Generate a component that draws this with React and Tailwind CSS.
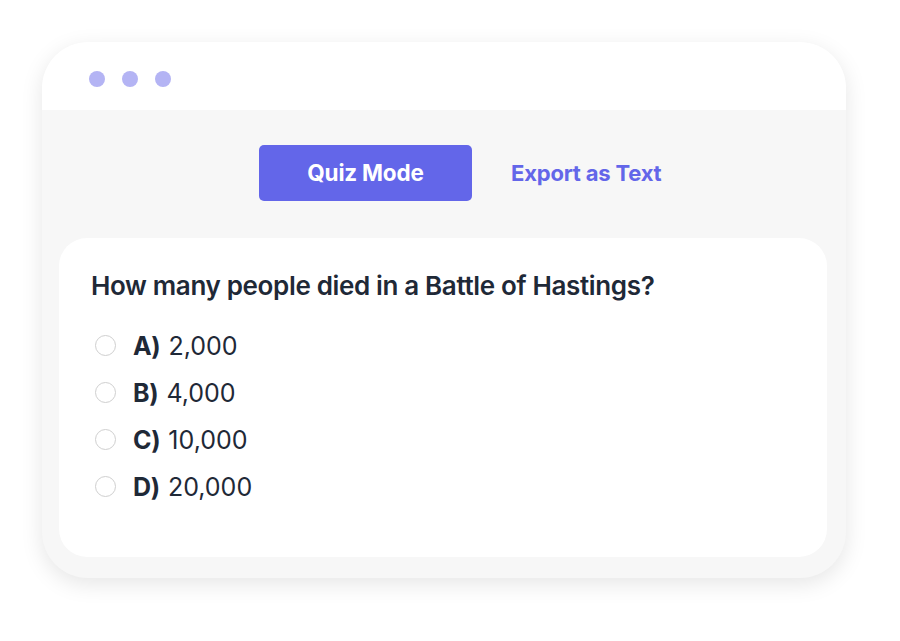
import React from 'react';

const options = [
  { label: 'A)', value: '2,000' },
  { label: 'B)', value: '4,000' },
  { label: 'C)', value: '10,000' },
  { label: 'D)', value: '20,000' },
];

const App = () => {
  return (
    <div className="w-[900px] h-[641px] bg-white pt-[42px] pl-[42px]" style={{ fontFamily: 'Inter, "Noto Sans", sans-serif' }}>
      <div className="w-[804px] h-[536px] rounded-[46px] bg-[#f7f7f7] overflow-hidden flex flex-col shadow-[0_6px_22px_rgba(0,0,0,0.10)]">
        {/* title bar */}
        <div className="h-[68px] bg-white flex items-start gap-[17px] pl-[47px] pt-[29px] shrink-0">
          <span className="w-[16px] h-[16px] rounded-full bg-[#b4b4f4]"></span>
          <span className="w-[16px] h-[16px] rounded-full bg-[#b4b4f4]"></span>
          <span className="w-[16px] h-[16px] rounded-full bg-[#b4b4f4]"></span>
        </div>

        {/* mode switch */}
        <div className="flex items-center pl-[217px] pt-[35px]">
          <button className="w-[213px] h-[56px] rounded-[5px] bg-[#6366e9] text-white text-[22.5px] font-bold tracking-[-0.2px]">
            Quiz Mode
          </button>
          <span className="ml-[39px] text-[22px] font-bold text-[#6366e9] tracking-[-0.2px]">Export as Text</span>
        </div>

        {/* question card */}
        <div className="mx-[17px] mr-[19px] mt-[37px] h-[319px] bg-white rounded-[28px] pl-[32px] pt-[32px]">
          <h2 className="text-[26px] font-semibold text-[#1f2937] leading-[32px] tracking-[-0.35px]">
            How many people died in a Battle of Hastings?
          </h2>
          <div className="mt-[26px] flex flex-col gap-[13px]">
            {options.map((o) => (
              <div key={o.label} className="flex items-center h-[34px]">
                <span className="ml-[4px] w-[21px] h-[21px] rounded-full border border-[#cfcfcf] bg-white shrink-0"></span>
                <span className="ml-[17px] text-[25px] font-bold text-[#1f2937] mt-[4px] tracking-[-0.3px]">{o.label}</span>
                <span className="ml-[8px] text-[25px] text-[#1f2937] mt-[4px]">{o.value}</span>
              </div>
            ))}
          </div>
        </div>
      </div>
    </div>
  );
};

export default App;
